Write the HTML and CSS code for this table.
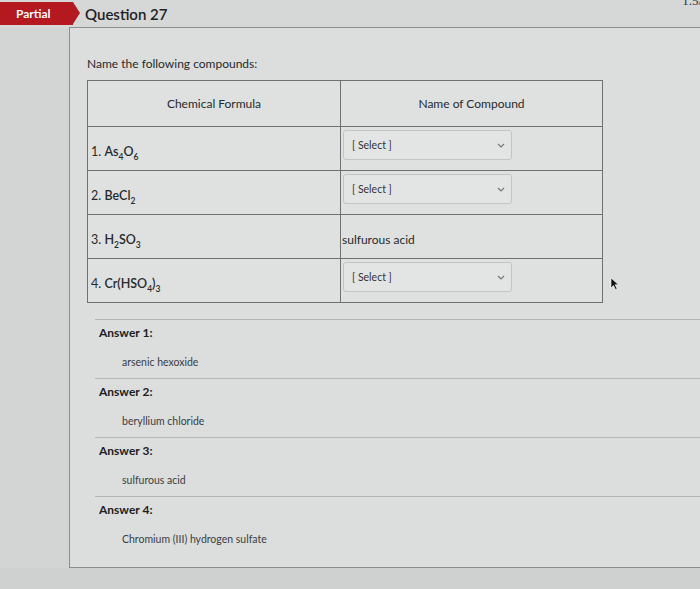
FILE: index.html
```html
<!DOCTYPE html>
<html>
<head>
<meta charset="utf-8">
<link rel="stylesheet" href="styles.css">
</head>
<body>
<div class="page">
  <header class="qhead">
    <div class="badge-col"><div class="badge">Partial</div></div>
    <div class="title-col">
      <h1 class="qtitle">Question 27</h1>
      <span class="pts">1.5/</span>
    </div>
  </header>
  <div class="main">
    <div class="gutter"></div>
    <section class="qbox">
      <p class="prompt">Name the following compounds:</p>
      <table class="ctable">
        <thead>
          <tr><th>Chemical Formula</th><th>Name of Compound</th></tr>
        </thead>
        <tbody>
          <tr>
            <td>1. <b>As<sub>4</sub>O<sub>6</sub></b></td>
            <td class="sel"><div class="select"><span>[ Select ]</span><svg class="chev" width="8" height="5" viewBox="0 0 8 5"><path d="M1 1l3 3 3-3" fill="none" stroke="#777" stroke-width="1.2"/></svg></div></td>
          </tr>
          <tr>
            <td>2. <b>BeCl<sub>2</sub></b></td>
            <td class="sel"><div class="select"><span>[ Select ]</span><svg class="chev" width="8" height="5" viewBox="0 0 8 5"><path d="M1 1l3 3 3-3" fill="none" stroke="#777" stroke-width="1.2"/></svg></div></td>
          </tr>
          <tr>
            <td>3. <b>H<sub>2</sub>SO<sub>3</sub></b></td>
            <td class="plain">sulfurous acid</td>
          </tr>
          <tr>
            <td>4. <b>Cr(HSO<sub>4</sub>)<sub>3</sub></b></td>
            <td class="sel"><div class="select"><span>[ Select ]</span><svg class="chev" width="8" height="5" viewBox="0 0 8 5"><path d="M1 1l3 3 3-3" fill="none" stroke="#777" stroke-width="1.2"/></svg></div></td>
          </tr>
        </tbody>
      </table>
      <div class="answers">
        <div class="answer"><div class="alabel">Answer 1:</div><div class="aval">arsenic hexoxide</div></div>
        <div class="answer"><div class="alabel">Answer 2:</div><div class="aval">beryllium chloride</div></div>
        <div class="answer"><div class="alabel">Answer 3:</div><div class="aval">sulfurous acid</div></div>
        <div class="answer"><div class="alabel">Answer 4:</div><div class="aval">Chromium (III) hydrogen sulfate</div></div>
      </div>
    </section>
  </div>
  <svg class="cursor" width="10" height="14" viewBox="0 0 10 14"><path d="M1 1v10l2.5-2.5 2 4 1.6-.8-2-4H8.5z" fill="#111" stroke="#fff" stroke-width=".6"/></svg>
</div>
</body>
</html>
```

FILE: styles.css
```css
html, body {
  margin: 0;
  padding: 0;
}
body {
  background: #cfd1d0;
  font-family: Lato, "Open Sans", sans-serif;
  color: #262a2c;
  width: 700px;
  height: 589px;
  overflow: hidden;
}
.page {
  position: relative;
}
.qhead {
  display: flex;
  height: 28px;
  background: #d6d8d7;
}
.badge-col {
  width: 69px;
  flex: none;
  position: relative;
  z-index: 2;
}
.badge {
  position: relative;
  margin-top: 2px;
  width: 73px;
  height: 23px;
  background: #b3191f;
  color: #fff;
  font-size: 12px;
  font-weight: 700;
  line-height: 23px;
  padding-left: 16px;
  box-sizing: border-box;
}
.badge::after {
  content: "";
  position: absolute;
  right: -7px;
  top: 0;
  border-left: 7px solid #b3191f;
  border-top: 11.5px solid transparent;
  border-bottom: 11.5px solid transparent;
}
.title-col {
  flex: 1;
  display: flex;
  align-items: center;
  border-bottom: 1px solid #8d8f8f;
  padding-left: 16px;
}
.qtitle {
  margin: 0;
  font-size: 15px;
  font-weight: 600;
  color: #1f2224;
}
.pts {
  margin-left: auto;
  align-self: flex-start;
  margin-top: -7px;
  margin-right: -2px;
  font-family: "Liberation Serif", serif;
  font-size: 13px;
  color: #333;
}
.main {
  display: flex;
  height: 540px;
}
.gutter {
  width: 69px;
  flex: none;
  background: #d3d5d4;
}
.qbox {
  flex: 1;
  background: #dcdedd;
  border-left: 1px solid #8b8d8d;
  border-bottom: 1px solid #8b8d8d;
  padding: 28px 0 11px 17px;
}
.prompt {
  margin: 0;
  font-size: 12px;
  line-height: 16px;
}
.ctable {
  margin: 8px 0 0 0;
  width: 516px;
  table-layout: fixed;
  border-collapse: collapse;
  background: #dfe1e0;
  font-size: 12.5px;
}
.ctable th, .ctable td {
  border: 1px solid #6f7171;
  padding: 0;
}
.ctable thead tr {
  height: 46px;
}
.ctable tbody tr {
  height: 44px;
}
.ctable th {
  font-weight: 400;
  text-align: center;
  font-size: 12px;
}
.ctable th:first-child {
  width: 252px;
}
.ctable td {
  padding: 5px 0 0 3px;
}
.ctable b {
  font-weight: 600;
}
.ctable sub {
  font-size: 8.5px;
  line-height: 0;
}
.ctable td.sel {
  vertical-align: top;
  padding: 3px 0 0 2px;
}
.ctable td.plain {
  padding-left: 1px;
  font-size: 12px;
}
.select {
  display: flex;
  align-items: center;
  width: 169px;
  height: 30px;
  box-sizing: border-box;
  border: 1px solid #c3c5c4;
  border-radius: 3px;
  background: #e3e5e4;
  padding: 0 6px 0 8px;
  font-size: 10.5px;
  color: #333;
}
.select .chev {
  margin-left: auto;
}
.answers {
  margin: 16px 0 0 8px;
}
.answer {
  border-top: 1px solid #b4b6b5;
  padding: 5px 0 9px 4px;
}
.answer:last-child {
  padding-bottom: 12px;
}
.alabel {
  font-size: 12px;
  font-weight: 700;
  line-height: 15px;
  color: #1d2022;
}
.aval {
  margin-top: 15px;
  padding-left: 23px;
  font-size: 10.5px;
  line-height: 14px;
  color: #3a3d3f;
}
.cursor {
  position: absolute;
  left: 610px;
  top: 277px;
}
```
